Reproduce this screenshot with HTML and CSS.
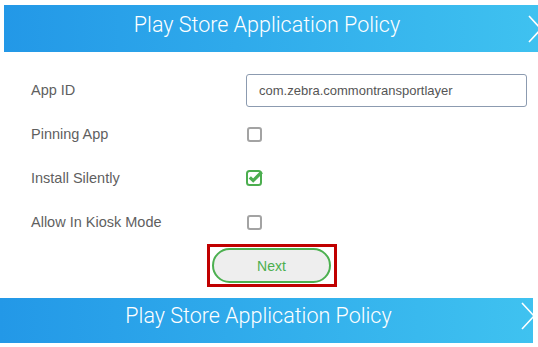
FILE: index.html
```html
<!DOCTYPE html>
<html>
<head>
<meta charset="utf-8">
<link rel="stylesheet" href="styles.css">
</head>
<body>
<div class="banner banner-top">
  <span class="banner-title">Play Store Application Policy</span>
  <svg class="chev" width="14" height="28" viewBox="0 0 14 28"><path d="M1 1 L13 14 L1 27" fill="none" stroke="#fff" stroke-width="1.6"/></svg>
</div>
<div class="form">
  <div class="row">
    <div class="label">App ID</div>
    <div class="control"><div class="input">com.zebra.commontransportlayer</div></div>
  </div>
  <div class="row">
    <div class="label">Pinning App</div>
    <div class="control"><span class="cb"></span></div>
  </div>
  <div class="row">
    <div class="label">Install Silently</div>
    <div class="control">
      <svg class="cbx" width="19" height="17" viewBox="0 0 19 17"><rect x="1" y="2" width="14" height="14" rx="2.5" fill="none" stroke="#4cae4f" stroke-width="2"/><path d="M3.8 8.3 L7.2 11.6 L15.8 3" fill="none" stroke="#4cae4f" stroke-width="3.2"/></svg>
    </div>
  </div>
  <div class="row">
    <div class="label">Allow In Kiosk Mode</div>
    <div class="control"><span class="cb"></span></div>
  </div>
</div>
<div class="btn-wrap">
  <div class="highlight"><button class="next">Next</button></div>
</div>
<div class="banner banner-bottom">
  <span class="banner-title">Play Store Application Policy</span>
  <svg class="chev" width="14" height="28" viewBox="0 0 14 28"><path d="M1 1 L13 14 L1 27" fill="none" stroke="#fff" stroke-width="1.6"/></svg>
</div>
</body>
</html>
```
FILE: styles.css
```css
html, body {
  margin: 0;
  padding: 0;
  background: #fff;
  width: 538px;
  height: 347px;
  overflow: hidden;
  font-family: "Liberation Sans", Arial, sans-serif;
}
.banner {
  position: relative;
  display: flex;
  align-items: center;
  justify-content: center;
  background: linear-gradient(90deg, #2398e7 0%, #3fc2f0 100%);
  color: #fff;
  overflow: hidden;
}
.banner-title {
  font-family: Roboto, "Noto Sans", sans-serif;
  font-weight: 300;
  font-size: 21.5px;
  letter-spacing: 0;
}
.banner-top {
  margin: 5px 0 0 4px;
  height: 47px;
  width: 540px;
}
.banner-top .banner-title {
  margin-left: -14px;
  margin-top: -9px;
}
.banner-top .chev {
  position: absolute;
  left: 524px;
  top: 10px;
}
.banner-bottom {
  margin-top: 11px;
  width: 533px;
  height: 45px;
}
.banner-bottom .banner-title {
  margin-left: -16px;
  margin-top: -11px;
}
.banner-bottom .chev {
  position: absolute;
  left: 521px;
  top: 4px;
}
.form {
  margin-top: 16px;
  padding-left: 31px;
}
.row {
  display: flex;
  align-items: center;
  height: 44px;
}
.label {
  width: 215px;
  font-size: 14.5px;
  color: #5f5f5f;
}
.control {
  display: flex;
  align-items: center;
}
.input {
  box-sizing: border-box;
  width: 281px;
  height: 33px;
  border: 1px solid #8c9bb0;
  border-radius: 3px;
  padding: 0 12px;
  display: flex;
  align-items: center;
  font-size: 13px;
  color: #555;
}
.cb {
  box-sizing: border-box;
  display: block;
  width: 15px;
  height: 15px;
  margin-left: 1px;
  border: 2px solid #a3a3a3;
  border-radius: 3px;
}
.cbx {
  display: block;
  margin-top: -2px;
}
.btn-wrap {
  padding-left: 207px;
}
.highlight {
  box-sizing: border-box;
  width: 130px;
  height: 43px;
  border: 3px solid #c00000;
  padding: 1px 3px 1px 2px;
}
.next {
  display: block;
  box-sizing: border-box;
  width: 119px;
  height: 35px;
  border: 2px solid #4cb050;
  border-radius: 18px;
  background: #eeeeee;
  color: #4cae4f;
  font-family: "Liberation Sans", Arial, sans-serif;
  font-size: 14px;
  padding: 0;
}
```
